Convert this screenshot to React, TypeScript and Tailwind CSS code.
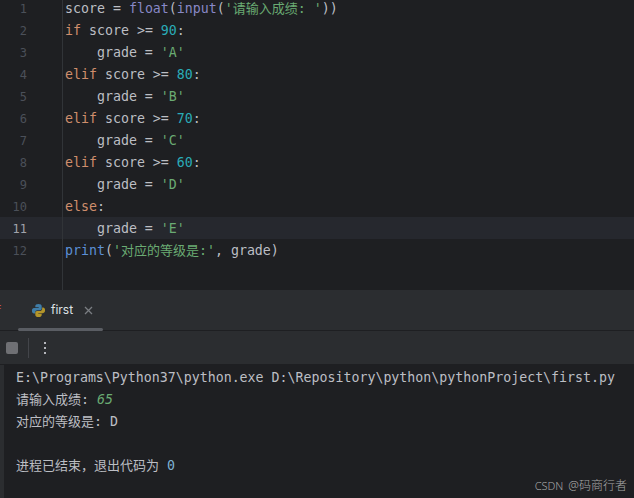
import React, { FC, ReactNode } from "react";

const K: FC<{ children: ReactNode }> = ({ children }) => <span className="text-[#cf8e6d]">{children}</span>;
const N: FC<{ children: ReactNode }> = ({ children }) => <span className="text-[#2aacb8]">{children}</span>;
const S: FC<{ children: ReactNode }> = ({ children }) => <span className="text-[#6aab73]">{children}</span>;
const B: FC<{ children: ReactNode }> = ({ children }) => <span className="text-[#8888c6]">{children}</span>;
// cjk glyphs run a bit narrower than the mono size
const C: FC<{ children: ReactNode }> = ({ children }) => <span className="text-[13px]">{children}</span>;

const lines: ReactNode[] = [
  <>score = <B>float</B>(<B>input</B>(<S>'<C>请输入成绩</C>: '</S>))</>,
  <><K>if</K> score &gt;= <N>90</N>:</>,
  <>    grade = <S>'A'</S></>,
  <><K>elif</K> score &gt;= <N>80</N>:</>,
  <>    grade = <S>'B'</S></>,
  <><K>elif</K> score &gt;= <N>70</N>:</>,
  <>    grade = <S>'C'</S></>,
  <><K>elif</K> score &gt;= <N>60</N>:</>,
  <>    grade = <S>'D'</S></>,
  <><K>else</K>:</>,
  <>    grade = <S>'E'</S></>,
  <><span className="text-[#5c8fd6]">print</span>(<S>'<C>对应的等级是</C>:'</S>, grade)</>,
];

const PythonIcon = () => (
  <svg width="15" height="15" viewBox="0 0 16 16">
    <path
      d="M8 1C5.6 1 4.6 1.9 4.6 3.2V4.6H8.2V5.2H3.2C1.9 5.2 1 6.3 1 8.2C1 10.1 1.9 11.2 3.2 11.2H4.6V9.6C4.6 8.4 5.5 7.6 6.7 7.6H9.6C10.7 7.6 11.4 6.8 11.4 5.8V3.2C11.4 1.9 10.2 1 8 1Z"
      fill="#3f7da8"
    />
    <path
      d="M8 15C10.4 15 11.4 14.1 11.4 12.8V11.4H7.8V10.8H12.8C14.1 10.8 15 9.7 15 7.8C15 5.9 14.1 4.8 12.8 4.8H11.9V6.4C11.9 7.6 11 8.4 9.8 8.4H6.4C5.3 8.4 4.6 9.2 4.6 10.2V12.8C4.6 14.1 5.8 15 8 15Z"
      fill="#b3952a"
    />
  </svg>
);

export default function App() {
  return (
    <div
      className="relative flex h-[498px] w-[634px] flex-col overflow-hidden bg-[#1e1f22] text-[13.28px] leading-[22px] text-[#bcbec4]"
      style={{ fontFamily: '"DejaVu Sans Mono", "Noto Sans CJK SC", monospace' }}
    >
      <div className="flex h-[290px] shrink-0 flex-col">
        {lines.map((line, i) => (
          <div key={i} className={`flex h-[22px] shrink-0 leading-[24px] ${i === 10 ? "bg-[#26282e]" : ""} ${i === 0 ? "-mt-[3px]" : ""}`}>
            <span className={`w-[27px] shrink-0 text-right text-[12px] ${i === 10 ? "text-[#a1a3ab]" : "text-[#4b5059]"}`}>{i + 1}</span>
            <span className="ml-[35px] mr-[2px] w-px shrink-0 bg-[#313438]" />
            <span className="whitespace-pre">{line}</span>
          </div>
        ))}
        <div className="ml-[62px] w-px flex-1 bg-[#313438]" />
      </div>

      <div className="flex h-[41px] shrink-0 border-b border-[#1e1f22] bg-[#2b2d30]">
        <span className="w-[18px] shrink-0 overflow-hidden pt-[10px] text-[#c75450]">
          <span className="-ml-[6px] block text-[13px]">f</span>
        </span>
        <div className="relative flex w-[85px] shrink-0 items-center pl-[13px] text-[12px] text-[#dfe1e5]" style={{ fontFamily: '"Inter", sans-serif' }}>
          <PythonIcon />
          <span className="ml-[5px]">first</span>
          <svg className="ml-[11px]" width="9" height="9" viewBox="0 0 9 9" stroke="#7a7d82" strokeWidth="1.3">
            <path d="M1 1L8 8M8 1L1 8" />
          </svg>
          <span className="absolute -bottom-px left-0 h-[3px] w-full rounded-sm bg-[#5a5d63]" />
        </div>
      </div>

      <div className="flex h-[34px] shrink-0 items-center border-b border-[#1e1f22] bg-[#2b2d30] pl-[6px]">
        <span className="h-[12px] w-[12px] rounded-[2px] bg-[#6f7074]" />
        <span className="ml-[10px] h-[20px] w-px bg-[#43454a]" />
        <span className="ml-[15px] flex flex-col gap-[3px]">
          <span className="h-[2px] w-[2px] bg-[#b4b6bb]" />
          <span className="h-[2px] w-[2px] bg-[#b4b6bb]" />
          <span className="h-[2px] w-[2px] bg-[#b4b6bb]" />
        </span>
      </div>

      <div className="flex flex-1">
        <div className="w-[4px] shrink-0 bg-[#2b2d30]" />
        <div className="whitespace-pre pl-[12px] pt-[2px]">
          <div>E:\Programs\Python37\python.exe D:\Repository\python\pythonProject\first.py</div>
          <div><C>请输入成绩</C>: <span className="italic text-[#6aab73]">65</span></div>
          <div><C>对应的等级是</C>: D</div>
          <div className="h-[22px]" />
          <div><C>进程已结束，退出代码为</C> <span className="text-[#7fb3d5]">0</span></div>
        </div>
      </div>

      <span
        className="absolute bottom-[3px] right-[7px] text-[12px] font-light leading-[18px] text-[#a8a8a8]"
        style={{ fontFamily: '"Noto Sans", "Noto Sans CJK SC", sans-serif' }}
      >
        <span className="mr-[5px] text-[11px]">CSDN</span>@码商行者
      </span>
    </div>
  );
}
